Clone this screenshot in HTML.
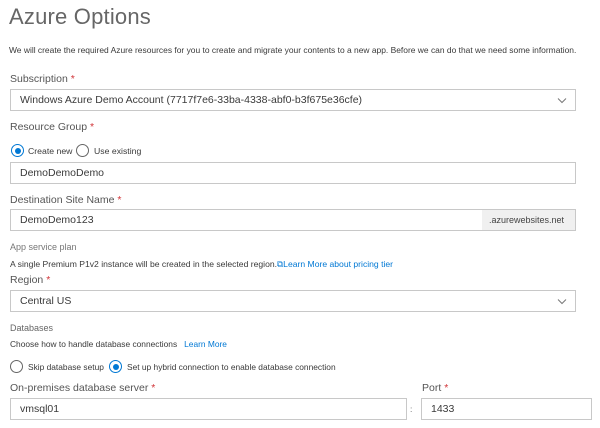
<!DOCTYPE html>
<html><head><meta charset="utf-8"><style>
*{margin:0;padding:0;box-sizing:border-box}
body{width:600px;height:428px;background:#fff;font-family:"Liberation Sans",sans-serif;color:#333;position:relative;overflow:hidden}
.a{position:absolute;white-space:nowrap}
.t{font-size:22px;color:#666;font-weight:300;left:9px;top:4px;letter-spacing:0.2px}
.s{font-size:8.45px;color:#3a3a3a}
.l{font-size:10.5px;color:#555}
.r{color:#d13438}
.box{position:absolute;border:1px solid #c8c8c8;background:#fff;font-size:10.5px;color:#3a3a3a;padding-left:9px;display:flex;align-items:center}
.chev{position:absolute;right:8px;top:7px}
.rad{position:absolute;width:13px;height:13px;border:1px solid #666;border-radius:50%;background:#fff}
.rad.on{border-color:#0078d4}
.rad.on::after{content:"";position:absolute;left:2.5px;top:2.5px;width:6px;height:6px;border-radius:50%;background:#0078d4}
.lk{color:#0078d4}
</style></head><body>
<div class="a t">Azure Options</div>
<div class="a s" style="left:9px;top:45px">We will create the required Azure resources for you to create and migrate your contents to a new app. Before we can do that we need some information.</div>
<div class="a l" style="left:10px;top:73px">Subscription <span class="r">*</span></div>
<div class="box" style="left:10px;top:89px;width:566px;height:22px">Windows Azure Demo Account (7717f7e6-33ba-4338-abf0-b3f675e36cfe)<svg class="chev" width="10" height="7" viewBox="0 0 10 7"><path d="M1 1.5L5 5.5L9 1.5" fill="none" stroke="#777" stroke-width="1"/></svg></div>
<div class="a l" style="left:10px;top:121px">Resource Group <span class="r">*</span></div>
<div class="rad on" style="left:11px;top:144px"></div>
<div class="a s" style="left:28px;top:146px;font-size:8.7px">Create new</div>
<div class="rad" style="left:76px;top:144px"></div>
<div class="a s" style="left:94px;top:146px;font-size:8.7px">Use existing</div>
<div class="box" style="left:10px;top:162px;width:566px;height:22px">DemoDemoDemo</div>
<div class="a l" style="left:10px;top:194px">Destination Site Name <span class="r">*</span></div>
<div class="box" style="left:10px;top:209px;width:566px;height:22px">DemoDemo123<div style="position:absolute;right:0;top:0;height:20px;width:93px;background:#f0f0f0;font-size:9px;color:#444;display:flex;align-items:center;padding-left:7px">.azurewebsites.net</div></div>
<div class="a" style="left:10px;top:242px;font-size:9px;color:#777">App service plan</div>
<div class="a s" style="left:10px;top:259px;font-size:8.6px">A single Premium P1v2 instance will be created in the selected region.<span class="lk">&#x29C9;Learn More about pricing tier</span></div>
<div class="a l" style="left:10px;top:274px">Region <span class="r">*</span></div>
<div class="box" style="left:10px;top:290px;width:566px;height:22px">Central US<svg class="chev" width="10" height="7" viewBox="0 0 10 7"><path d="M1 1.5L5 5.5L9 1.5" fill="none" stroke="#777" stroke-width="1"/></svg></div>
<div class="a" style="left:10px;top:323px;font-size:9px;color:#666">Databases</div>
<div class="a s" style="left:10px;top:339px;font-size:8.4px">Choose how to handle database connections &nbsp;&nbsp;<span class="lk">Learn More</span></div>
<div class="rad" style="left:10px;top:360px"></div>
<div class="a s" style="left:28px;top:362px;font-size:8.4px">Skip database setup</div>
<div class="rad on" style="left:109px;top:360px"></div>
<div class="a s" style="left:127px;top:362px;font-size:8.4px">Set up hybrid connection to enable database connection</div>
<div class="a l" style="left:10px;top:382px">On-premises database server <span class="r">*</span></div>
<div class="box" style="left:10px;top:398px;width:397px;height:22px">vmsql01</div>
<div class="a s" style="left:410px;top:404px;color:#666">:</div>
<div class="a l" style="left:422px;top:382px">Port <span class="r">*</span></div>
<div class="box" style="left:421px;top:398px;width:171px;height:22px">1433</div>
</body></html>
